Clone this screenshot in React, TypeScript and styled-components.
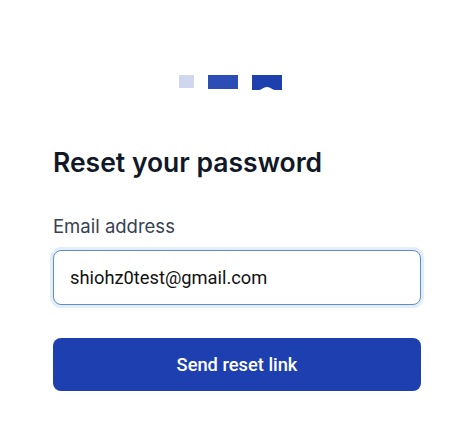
import React from 'react';
import styled, {createGlobalStyle} from 'styled-components';

const GlobalStyle = createGlobalStyle`
    html, body {
        margin: 0;
        padding: 0;
        background: #fff;
    }
`;

const Page = styled.div`
    width: 474px;
    height: 437px;
    box-sizing: border-box;
    padding: 75px 53px 0;
    display: flex;
    flex-direction: column;
    font-family: Inter, "Liberation Sans", sans-serif;
`;

const Steps = styled.div`
    display: flex;
    justify-content: center;
    align-items: flex-start;
    gap: 14px;
    height: 15px;
    padding-right: 14px;
`;

const Step = styled.div<{ $state: 'done' | 'active', $wide?: boolean }>`
    width: ${props => (props.$wide ? 30 : 15)}px;
    height: ${props => (props.$wide ? 14 : 13)}px;
    background: ${props => (props.$state === 'done' ? '#cfd6ee' : '#2b4db5')};
`;

const NotchStep = styled.svg`
    display: block;
`;

const Title = styled.h1`
    margin: 56px 0 0;
    font-size: 26.5px;
    line-height: 32px;
    font-weight: 600;
    color: #111827;
`;

const Label = styled.label`
    margin-top: 36px;
    font-size: 18.5px;
    line-height: 24px;
    color: #374151;
`;

const Input = styled.input`
    margin-top: 12px;
    box-sizing: border-box;
    width: 100%;
    height: 55px;
    padding: 0 16px;
    border: 1.5px solid #5d8ccb;
    border-radius: 8px;
    box-shadow: 0 0 0 3px #e4edfa;
    outline: none;
    font-family: Roboto, "Liberation Sans", sans-serif;
    font-size: 18.3px;
    color: #111;
    background: #fff;
`;

const Button = styled.button`
    margin-top: 33px;
    width: 100%;
    height: 53px;
    border: none;
    border-radius: 8px;
    background: #1e3faf;
    color: #fff;
    font-family: Roboto, "Liberation Sans", sans-serif;
    font-size: 18.3px;
    font-weight: 500;
`;

export default function App() {
    return (
        <Page>
            <GlobalStyle />
            <Steps>
                <Step $state='done' />
                <Step $state='active' $wide />
                <NotchStep width='30' height='15' viewBox='0 0 30 15'>
                    <path d='M0 0H30V15H23C20 15 19 12 15 12C11 12 10 15 7 15H0Z' fill='#1e3fae' />
                </NotchStep>
            </Steps>
            <Title>Reset your password</Title>
            <Label htmlFor='email'>Email address</Label>
            <Input id='email' type='email' defaultValue='shiohz0test@gmail.com' />
            <Button type='button'>Send reset link</Button>
        </Page>
    );
}
